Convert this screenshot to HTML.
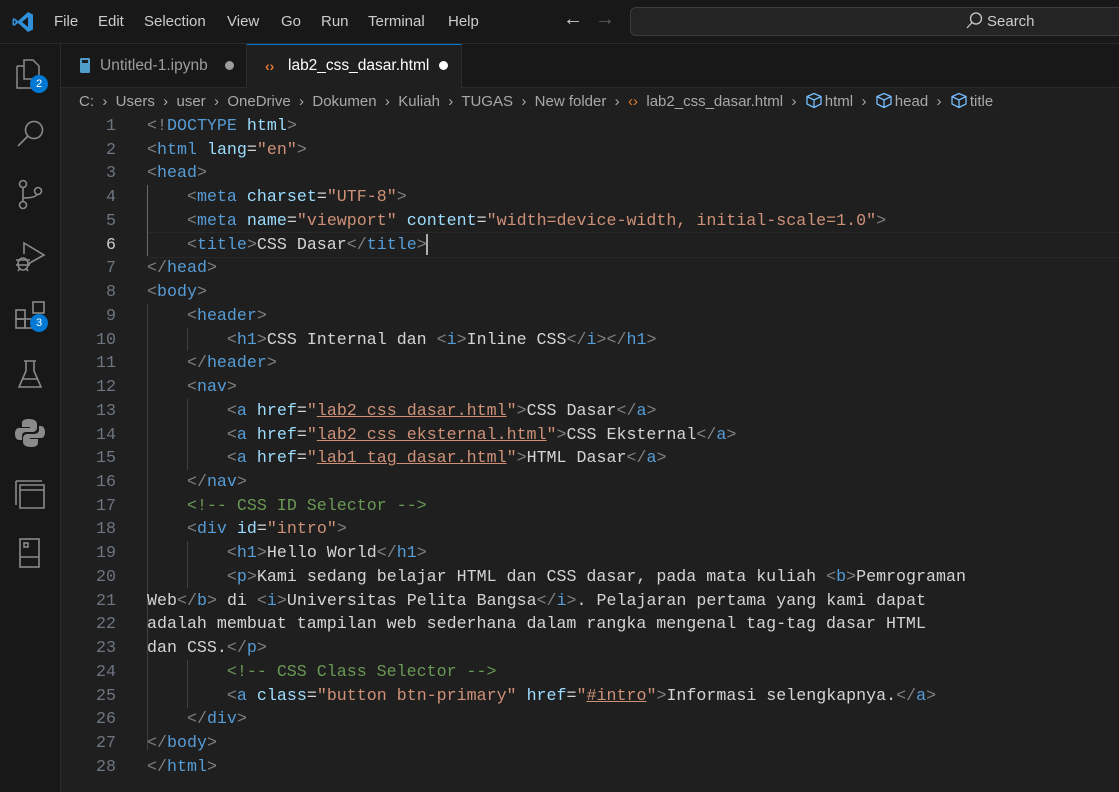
<!DOCTYPE html>
<html><head><style>
body{margin:0;width:1119px;height:792px;background:#1f1f1f;overflow:hidden;position:relative;font-family:"Liberation Sans",sans-serif}
.title{position:absolute;left:0;top:0;width:1119px;height:43px;background:#181818;border-bottom:1px solid #2b2b2b}
.menu{position:absolute;top:13px;color:#cccccc;font-size:15px}
.act{position:absolute;left:0;top:44px;width:60px;height:748px;background:#181818;border-right:1px solid #2b2b2b}
.tabs{position:absolute;left:61px;top:44px;width:1058px;height:44px;background:#181818}
.tab{position:absolute;top:0;height:43px;font-size:15.5px;line-height:44px;color:#9d9d9d}
.bc{position:absolute;left:79px;top:92px;font-size:15px;color:#a9a9a9;white-space:pre}
.bc svg{vertical-align:-3px;margin-right:2px}
pre{position:absolute;margin:0;top:114px;font-family:"Liberation Mono",monospace;font-size:16.65px;line-height:23.74px;color:#d4d4d4}
.b{color:#808080}.g{color:#569cd6}.a{color:#9cdcfe}.s{color:#ce9178}.c{color:#6a9955}.u{text-decoration:underline}
.badge{position:absolute;width:18px;height:18px;border-radius:9px;background:#0078d4;color:#fff;font-size:11px;text-align:center;line-height:18px}
.guide{position:absolute;width:1px;background:#404040}
</style></head><body>
<div class="title">
<svg style="position:absolute;left:11px;top:10px" width="24" height="24" viewBox="0 0 24 24"><path d="M17 2 L22 4.5 V19.5 L17 22 L7 13 L3 16 L1.5 15 V9 L3 8 L7 11 Z M17 7 L11 12 L17 17 Z M3 10 V14 L5 12 Z" fill="#2f8fd8"/></svg>
<span class="menu" style="left:54px">File</span><span class="menu" style="left:98px">Edit</span><span class="menu" style="left:144px">Selection</span><span class="menu" style="left:227px">View</span><span class="menu" style="left:281px">Go</span><span class="menu" style="left:321px">Run</span><span class="menu" style="left:368px">Terminal</span><span class="menu" style="left:448px">Help</span>
<span style="position:absolute;left:563px;top:8px;color:#ccc;font-size:20px">←</span><span style="position:absolute;left:595px;top:8px;color:#5a5a5a;font-size:20px">→</span>
<div style="position:absolute;left:630px;top:7px;width:500px;height:27px;border:1px solid #3c3c3c;border-radius:6px;background:#242424"></div>
<svg style="position:absolute;left:964px;top:11px" width="20" height="20" viewBox="0 0 20 20"><circle cx="12" cy="7.5" r="5.5" fill="none" stroke="#ccc" stroke-width="1.3"/><path d="M8 11.5 L3 17" stroke="#ccc" stroke-width="1.3"/></svg>
<span style="position:absolute;left:987px;top:13px;color:#ccc;font-size:15px">Search</span>
</div>
<div class="act">
<svg style="position:absolute;left:15px;top:13px" width="30" height="32" viewBox="0 0 30 32" fill="none" stroke="#8a8a8a" stroke-width="1.5"><path d="M9 3 H18 L24 9 V22 H9 Z M2 9 H9 M2 9 V31 H17 V22"/></svg>
<div class="badge" style="left:30px;top:31px">2</div>
<svg style="position:absolute;left:15px;top:74px" width="32" height="32" viewBox="0 0 32 32" fill="none" stroke="#8a8a8a" stroke-width="1.6"><circle cx="19" cy="12" r="8.5"/><path d="M13 18 L3 28"/></svg>
<svg style="position:absolute;left:15px;top:134px" width="30" height="34" viewBox="0 0 30 34" fill="none" stroke="#8a8a8a" stroke-width="1.6"><circle cx="8" cy="6" r="3.5"/><circle cx="8" cy="27" r="3.5"/><circle cx="23" cy="13" r="3.5"/><path d="M8 9.5 V23.5 M8 20 Q20 20 22 16.5"/></svg>
<svg style="position:absolute;left:14px;top:196px" width="32" height="34" viewBox="0 0 32 34" fill="none" stroke="#8a8a8a" stroke-width="1.6"><path d="M10 14 V3 L30 15 L14 24"/><ellipse cx="9" cy="24" rx="5" ry="6"/><path d="M2 20 H16 M2 25 H16 M4 31 L6 28 M14 31 L12 28"/></svg>
<svg style="position:absolute;left:14px;top:256px" width="34" height="34" viewBox="0 0 34 34" fill="none" stroke="#8a8a8a" stroke-width="1.6"><rect x="2" y="10" width="9" height="9"/><rect x="2" y="19" width="9" height="9"/><rect x="11" y="19" width="9" height="9"/><rect x="19" y="2" width="11" height="11"/></svg>
<div class="badge" style="left:30px;top:270px">3</div>
<svg style="position:absolute;left:17px;top:315px" width="26" height="32" viewBox="0 0 26 32" fill="none" stroke="#8a8a8a" stroke-width="1.6"><path d="M7 2 H19 M9 2 V12 L2 28 H24 L17 12 V2 M5 20 H21"/></svg>
<svg style="position:absolute;left:14px;top:373px" width="32" height="32" viewBox="0 0 32 32" fill="#8a8a8a"><path d="M15 2 C8 2 8 5 8 7 V10 H16 V11 H5 C2 11 1 14 1 17 C1 21 3 23 5 23 H8 V19 C8 16 10 15 12 15 H19 C21 15 23 13 23 11 V7 C23 4 20 2 15 2 Z"/><path d="M17 30 C24 30 24 27 24 25 V22 H16 V21 H27 C30 21 31 18 31 15 C31 11 29 9 27 9 H25 V13 C25 16 22 17 20 17 H13 C11 17 9 19 9 21 V25 C9 28 12 30 17 30 Z"/></svg>
<svg style="position:absolute;left:14px;top:433px" width="32" height="32" viewBox="0 0 32 32" fill="none" stroke="#8a8a8a" stroke-width="1.6"><path d="M2 4 H28 M2 4 V28 M6 8 H30 V31 H6 Z M6 13 H30"/></svg>
<svg style="position:absolute;left:18px;top:493px" width="24" height="32" viewBox="0 0 24 32" fill="none" stroke="#8a8a8a" stroke-width="1.6"><rect x="2" y="2" width="19" height="28"/><path d="M2 20 H21"/><rect x="6" y="6" width="4" height="4"/></svg>
</div>
<div class="tabs">
<div class="tab" style="left:0;width:185px;border-right:1px solid #2b2b2b;border-bottom:1px solid #2b2b2b">
<svg style="position:absolute;left:18px;top:13px" width="12" height="17" viewBox="0 0 12 17"><rect x="1" y="1" width="10" height="15" rx="1.5" fill="#4f9dc9"/><rect x="3" y="3" width="6" height="3" fill="#1f1f1f"/></svg>
<span style="position:absolute;left:39px">Untitled-1.ipynb</span>
<span style="position:absolute;left:164px;top:17px;width:9px;height:9px;border-radius:5px;background:#9d9d9d;line-height:0"></span></div>
<div class="tab" style="left:186px;width:214px;height:44px;background:#1f1f1f;border-top:1px solid #0078d4;border-right:1px solid #2b2b2b;color:#fff">
<span style="position:absolute;left:18px;top:-1px;color:#e37933;font-size:14px;font-weight:bold">‹›</span>
<span style="position:absolute;left:41px;top:-1px">lab2_css_dasar.html</span>
<span style="position:absolute;left:192px;top:16px;width:9px;height:9px;border-radius:5px;background:#fff;line-height:0"></span></div>
<div style="position:absolute;left:401px;top:43px;width:657px;height:1px;background:#2b2b2b"></div>
</div>
<div class="bc">C:  ›  Users  ›  user  ›  OneDrive  ›  Dokumen  ›  Kuliah  ›  TUGAS  ›  New folder  ›  <span style="color:#e37933">‹›</span>  lab2_css_dasar.html  ›  <svg width="18" height="17" viewBox="0 0 18 17" fill="none" stroke="#75beff" stroke-width="1.3"><path d="M9 1.5 L16 4.5 V12 L9 15.5 L2 12 V4.5 Z M2 4.5 L9 8 L16 4.5 M9 8 V15.5"/></svg>html  ›  <svg width="18" height="17" viewBox="0 0 18 17" fill="none" stroke="#75beff" stroke-width="1.3"><path d="M9 1.5 L16 4.5 V12 L9 15.5 L2 12 V4.5 Z M2 4.5 L9 8 L16 4.5 M9 8 V15.5"/></svg>head  ›  <svg width="18" height="17" viewBox="0 0 18 17" fill="none" stroke="#75beff" stroke-width="1.3"><path d="M9 1.5 L16 4.5 V12 L9 15.5 L2 12 V4.5 Z M2 4.5 L9 8 L16 4.5 M9 8 V15.5"/></svg>title</div>
<div style="position:absolute;left:147px;top:232px;width:972px;height:24px;border-top:1px solid #282828;border-bottom:1px solid #282828"></div>
<div class="guide" style="left:147px;top:185px;height:71px;background:#6a6a6a"></div>
<div class="guide" style="left:147px;top:304px;height:446px"></div>
<div class="guide" style="left:187px;top:328px;height:23px"></div>
<div class="guide" style="left:187px;top:399px;height:71px"></div>
<div class="guide" style="left:187px;top:541px;height:47px"></div>
<div class="guide" style="left:187px;top:660px;height:48px"></div>
<div style="position:absolute;left:426px;top:234px;width:2px;height:21px;background:#aeafad"></div>
<pre style="left:80px;width:36px;text-align:right;color:#6e7681">1
2
3
4
5
<span style="color:#ccc">6</span>
7
8
9
10
11
12
13
14
15
16
17
18
19
20
21
22
23
24
25
26
27
28</pre>
<pre style="left:147px"><span class="b">&lt;!</span><span class="g">DOCTYPE</span> <span class="a">html</span><span class="b">&gt;</span>
<span class="b">&lt;</span><span class="g">html</span> <span class="a">lang</span>=<span class="s">"en"</span><span class="b">&gt;</span>
<span class="b">&lt;</span><span class="g">head</span><span class="b">&gt;</span>
    <span class="b">&lt;</span><span class="g">meta</span> <span class="a">charset</span>=<span class="s">"UTF-8"</span><span class="b">&gt;</span>
    <span class="b">&lt;</span><span class="g">meta</span> <span class="a">name</span>=<span class="s">"viewport"</span> <span class="a">content</span>=<span class="s">"width=device-width, initial-scale=1.0"</span><span class="b">&gt;</span>
    <span class="b">&lt;</span><span class="g">title</span><span class="b">&gt;</span>CSS Dasar<span class="b">&lt;/</span><span class="g">title</span><span class="b">&gt;</span>
<span class="b">&lt;/</span><span class="g">head</span><span class="b">&gt;</span>
<span class="b">&lt;</span><span class="g">body</span><span class="b">&gt;</span>
    <span class="b">&lt;</span><span class="g">header</span><span class="b">&gt;</span>
        <span class="b">&lt;</span><span class="g">h1</span><span class="b">&gt;</span>CSS Internal dan <span class="b">&lt;</span><span class="g">i</span><span class="b">&gt;</span>Inline CSS<span class="b">&lt;/</span><span class="g">i</span><span class="b">&gt;&lt;/</span><span class="g">h1</span><span class="b">&gt;</span>
    <span class="b">&lt;/</span><span class="g">header</span><span class="b">&gt;</span>
    <span class="b">&lt;</span><span class="g">nav</span><span class="b">&gt;</span>
        <span class="b">&lt;</span><span class="g">a</span> <span class="a">href</span>=<span class="s">"<span class="u">lab2_css_dasar.html</span>"</span><span class="b">&gt;</span>CSS Dasar<span class="b">&lt;/</span><span class="g">a</span><span class="b">&gt;</span>
        <span class="b">&lt;</span><span class="g">a</span> <span class="a">href</span>=<span class="s">"<span class="u">lab2_css_eksternal.html</span>"</span><span class="b">&gt;</span>CSS Eksternal<span class="b">&lt;/</span><span class="g">a</span><span class="b">&gt;</span>
        <span class="b">&lt;</span><span class="g">a</span> <span class="a">href</span>=<span class="s">"<span class="u">lab1_tag_dasar.html</span>"</span><span class="b">&gt;</span>HTML Dasar<span class="b">&lt;/</span><span class="g">a</span><span class="b">&gt;</span>
    <span class="b">&lt;/</span><span class="g">nav</span><span class="b">&gt;</span>
    <span class="c">&lt;!-- CSS ID Selector --&gt;</span>
    <span class="b">&lt;</span><span class="g">div</span> <span class="a">id</span>=<span class="s">"intro"</span><span class="b">&gt;</span>
        <span class="b">&lt;</span><span class="g">h1</span><span class="b">&gt;</span>Hello World<span class="b">&lt;/</span><span class="g">h1</span><span class="b">&gt;</span>
        <span class="b">&lt;</span><span class="g">p</span><span class="b">&gt;</span>Kami sedang belajar HTML dan CSS dasar, pada mata kuliah <span class="b">&lt;</span><span class="g">b</span><span class="b">&gt;</span>Pemrograman
Web<span class="b">&lt;/</span><span class="g">b</span><span class="b">&gt;</span> di <span class="b">&lt;</span><span class="g">i</span><span class="b">&gt;</span>Universitas Pelita Bangsa<span class="b">&lt;/</span><span class="g">i</span><span class="b">&gt;</span>. Pelajaran pertama yang kami dapat
adalah membuat tampilan web sederhana dalam rangka mengenal tag-tag dasar HTML
dan CSS.<span class="b">&lt;/</span><span class="g">p</span><span class="b">&gt;</span>
        <span class="c">&lt;!-- CSS Class Selector --&gt;</span>
        <span class="b">&lt;</span><span class="g">a</span> <span class="a">class</span>=<span class="s">"button btn-primary"</span> <span class="a">href</span>=<span class="s">"<span class="u">#intro</span>"</span><span class="b">&gt;</span>Informasi selengkapnya.<span class="b">&lt;/</span><span class="g">a</span><span class="b">&gt;</span>
    <span class="b">&lt;/</span><span class="g">div</span><span class="b">&gt;</span>
<span class="b">&lt;/</span><span class="g">body</span><span class="b">&gt;</span>
<span class="b">&lt;/</span><span class="g">html</span><span class="b">&gt;</span></pre>
</body></html>
